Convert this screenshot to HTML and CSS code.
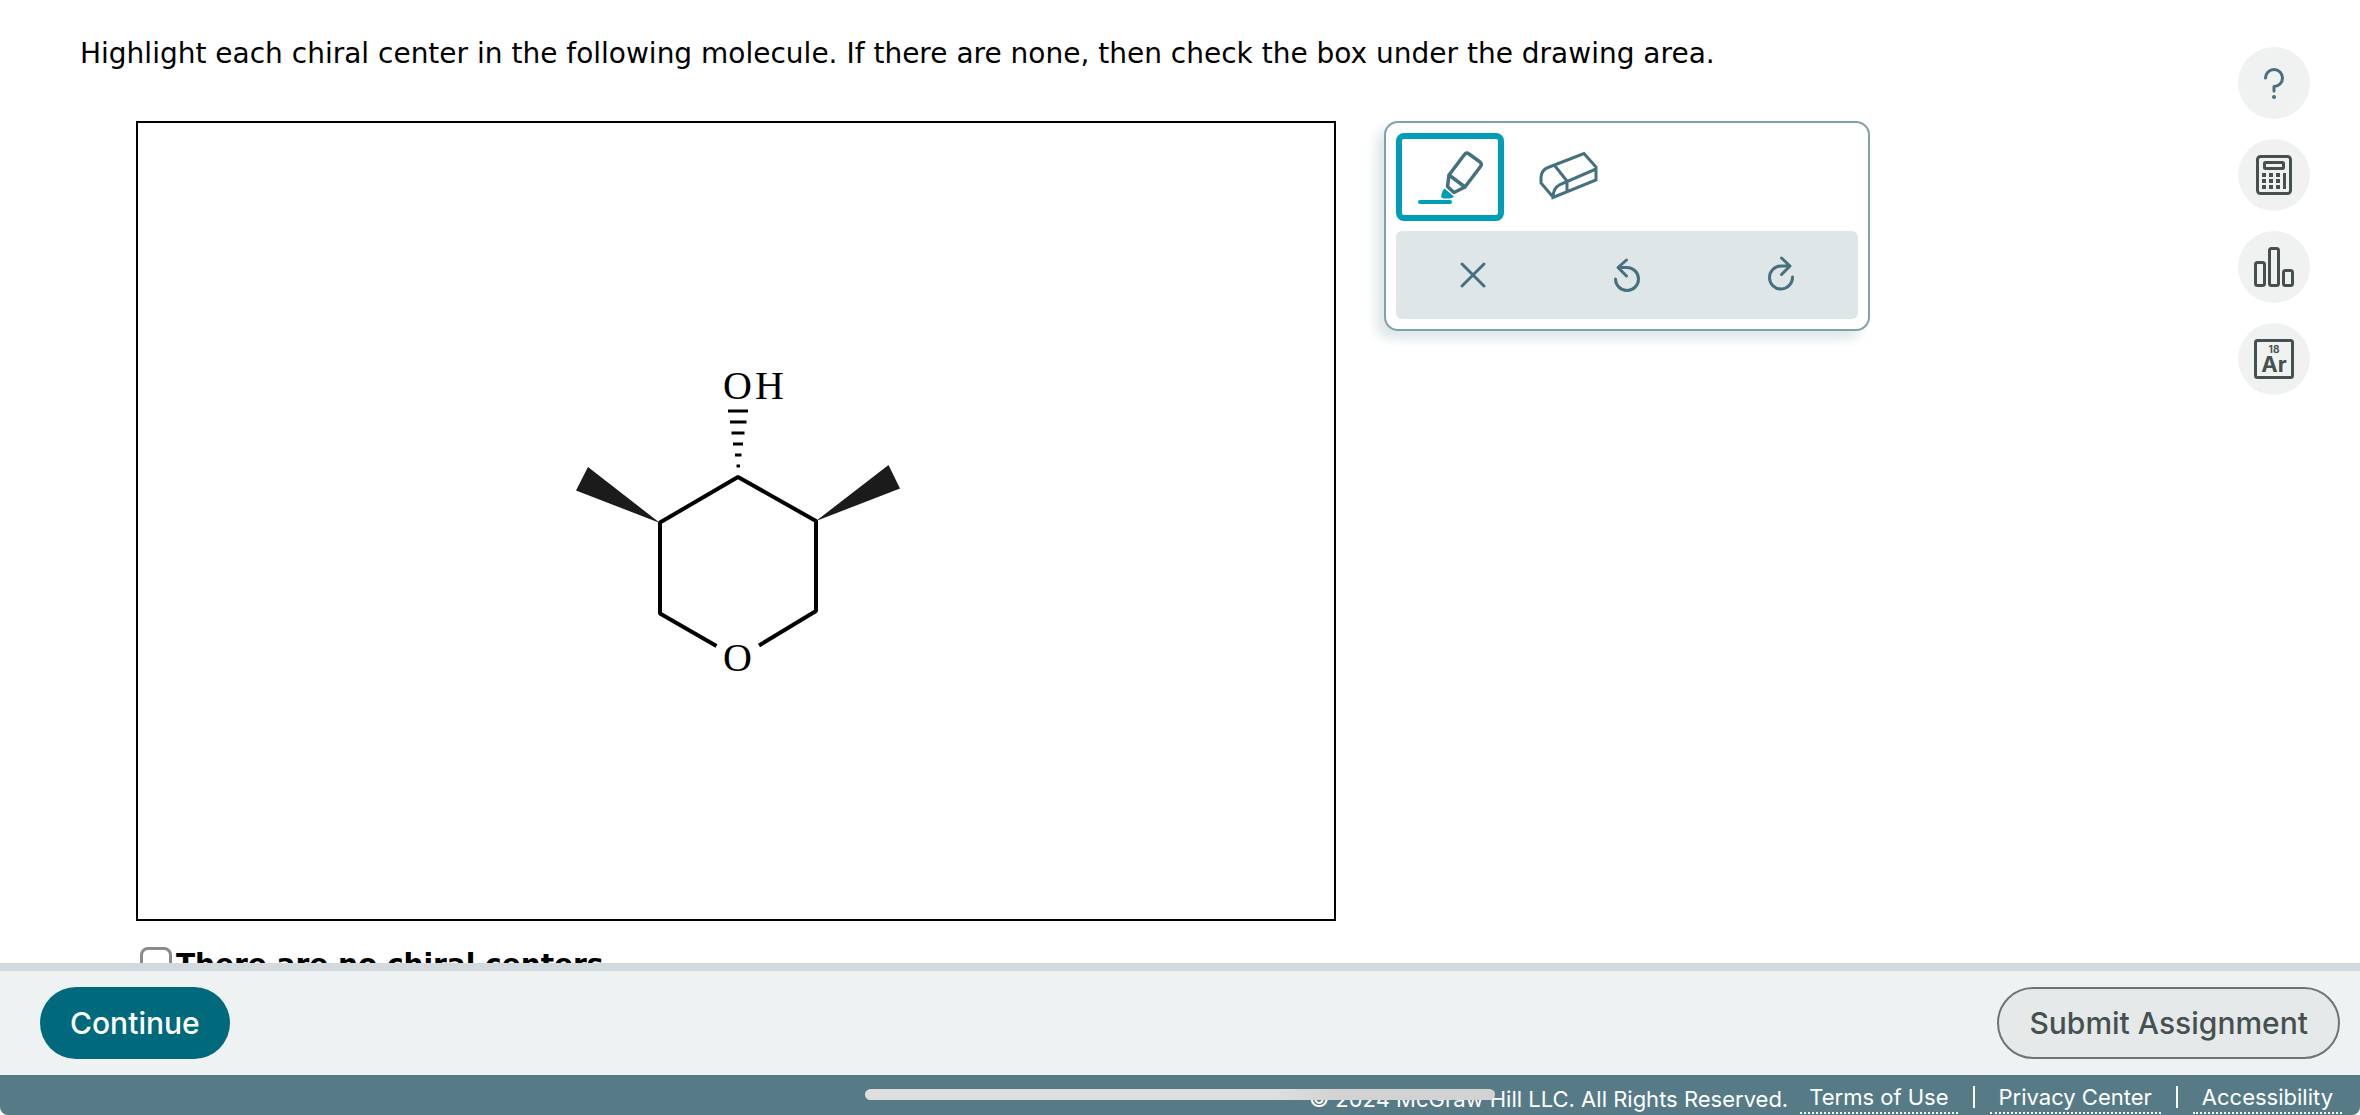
FILE: index.html
```html
<!DOCTYPE html>
<html lang="en">
<head>
<meta charset="utf-8">
<meta name="viewport" content="width=device-width, initial-scale=1">
<title>Chiral centers</title>
<link rel="stylesheet" href="styles.css">
</head>
<body>
<div class="app">
  <main class="workspace">
    <section class="question">
      <p class="prompt">Highlight each chiral center in the following molecule. If there are none, then check the box under the drawing area.</p>
      <div class="exercise">
        <div class="drawing">
          <div class="canvas">
            <svg class="molecule" viewBox="0 0 360 340" role="img" aria-label="Molecule">
              <g fill="none" stroke="#000" stroke-width="4" stroke-linejoin="bevel">
                <path d="M156.500 296 100 263.500V172.500L178 127l78 44v90l-57 34.500"/>
              </g>
              <g stroke="#000" stroke-width="3">
                <path d="M168 61h20M170 72h16.500M171.500 83h13M173 94h10M175 105h6.500M176.500 116h3.500"/>
              </g>
              <path fill="#1b1b1b" d="M28 117 100 173 16 140.500zM328.500 115 340 138.500 256 171z"/>
              <text class="atom" x="163" y="49">O</text>
              <text class="atom" x="195" y="49">H</text>
              <text class="atom" x="163" y="321">O</text>
            </svg>
          </div>
          <label class="none-option"><input type="checkbox" class="tick">There are no chiral centers.</label>
        </div>
        <div class="toolbox">
          <div class="tools">
            <button class="tool tool-active" type="button" aria-label="Highlighter">
              <svg width="96" height="76" viewBox="-6 -4 96 76" fill="none" stroke="#44707f" stroke-width="3.500" stroke-linejoin="round">
                <path d="M41 32 56.500 11.500Q58.500 9 61 11L72 19Q74.500 21 72.500 23.500L57 44z"/>
                <path d="M41 32 39.500 43.500 46 49.500 57 44"/>
                <path d="M36.500 45.500 46 53.500Q44 56 40 55.500H36Q32 55 33.500 51.500 34.500 47 36.500 45.500z" fill="#009db8" stroke="none"/>
                <path d="M12 59H42" stroke="#009db8" stroke-width="4" stroke-linecap="round"/>
              </svg>
            </button>
            <button class="tool" type="button" aria-label="Eraser">
              <svg width="96" height="76" viewBox="6 -4 96 76" fill="none" stroke="#44707f" stroke-width="3">
                <path d="M39 54 27 40V34Q27.500 27 34 24.500L70 10.500 82 24V37L39 54.500Q39 45 46 41.500L82 26M41 23 53 38V49.500"/>
              </svg>
            </button>
          </div>
          <div class="actions">
            <button class="action" type="button" aria-label="Clear">
              <svg width="36" height="40" viewBox="0 0 36 40"><path d="M7 9 29 31M29 9 7 31"/></svg>
            </button>
            <button class="action" type="button" aria-label="Undo">
              <svg width="36" height="40" viewBox="0 0 36 40"><path d="M6.500 24A11.500 11.500 0 1 0 18 12.500H10M17.500 5 9 12.500 17.500 21"/></svg>
            </button>
            <button class="action" type="button" aria-label="Redo">
              <svg width="36" height="40" viewBox="0 0 36 40"><path d="M29.500 22A11.500 11.500 0 1 1 18 11H26.500M18.500 3 27 11 18.500 19.500"/></svg>
            </button>
          </div>
        </div>
      </div>
    </section>
    <aside class="rail">
      <button class="rail-button" type="button" aria-label="Help">
        <svg width="40" height="40" viewBox="0 0 40 40" fill="none" stroke="#44707f" stroke-width="3" stroke-linecap="round" stroke-linejoin="round"><path d="M11.500 15A8.500 8.500 0 1 1 20 23.500V28"/><circle cx="20" cy="34" r="2" fill="#44707f" stroke="none"/></svg>
      </button>
      <button class="rail-button" type="button" aria-label="Calculator">
        <svg width="40" height="40" viewBox="0 0 40 40" fill="none" stroke="#46514f" stroke-width="3"><rect x="3.500" y="1.500" width="33" height="37" rx="3"/><rect x="10.500" y="7.500" width="19" height="6" rx="1"/><path stroke-width="4" stroke-dasharray="4 3" d="M8 20h18M8 26h18M8 32h18"/><path d="M30.500 18v16"/></svg>
      </button>
      <button class="rail-button" type="button" aria-label="Progress">
        <svg width="40" height="40" viewBox="0 0 40 40" fill="none" stroke="#46514f" stroke-width="3"><rect x="1.500" y="15.500" width="9" height="23" rx="2"/><rect x="15.500" y="1.500" width="9" height="37" rx="2"/><rect x="29.500" y="23.500" width="9" height="15" rx="2"/></svg>
      </button>
      <button class="rail-button" type="button" aria-label="Periodic table">
        <svg width="40" height="40" viewBox="0 0 40 40"><rect x="1.500" y="1.500" width="37" height="37" rx="2" fill="none" stroke="#46514f" stroke-width="3"/><text class="element-number" x="20" y="14">18</text><text class="element-symbol" x="20" y="33">Ar</text></svg>
      </button>
    </aside>
  </main>
  <div class="submit-bar">
    <button class="pill pill-primary" type="button">Continue</button>
    <button class="pill pill-outline" type="button">Submit Assignment</button>
  </div>
  <footer class="footer">
    <span class="copyright">© 2024 McGraw Hill LLC. All Rights Reserved.</span>
    <a class="footer-link" href="#">Terms of Use</a>
    <span class="divider"></span>
    <a class="footer-link" href="#">Privacy Center</a>
    <span class="divider"></span>
    <a class="footer-link" href="#">Accessibility</a>
    <div class="home-indicator"></div>
  </footer>
</div>
</body>
</html>
```
FILE: styles.css
```css
* { box-sizing: border-box; }
body {
  margin: 0;
  background: #fff;
  color: #000;
  font-family: "DejaVu Sans", sans-serif;
}
button {
  margin: 0;
  padding: 0;
  border: 0;
  background: none;
  font: inherit;
  cursor: pointer;
}
svg { display: block; }
.app {
  display: flex;
  flex-direction: column;
  height: 100vh;
  overflow: hidden;
}
.workspace {
  flex: 1;
  min-height: 0;
  display: flex;
  justify-content: space-between;
  overflow: hidden;
}
.question { padding: 36px 0 0 80px; }
.prompt {
  margin: 0 0 49px;
  font-size: 28px;
  line-height: 36px;
}
.exercise {
  display: flex;
  align-items: flex-start;
  gap: 48px;
  padding-left: 56px;
}
.canvas {
  display: flex;
  width: 1200px;
  height: 800px;
  padding: 227px 0 0 422px;
  border: 2px solid #000;
}
.molecule {
  width: 360px;
  height: 340px;
}
.atom {
  font-family: "Liberation Serif", serif;
  font-size: 40px;
}
.none-option {
  display: flex;
  align-items: flex-start;
  gap: 4px;
  margin-top: 26px;
  padding-left: 4px;
  font-size: 28px;
  font-weight: 700;
  line-height: 36px;
}
.tick {
  appearance: none;
  width: 32px;
  height: 32px;
  margin: 0;
  border: 3px solid #8b8a8f;
  border-radius: 8px;
  background: #fff;
}
.toolbox {
  display: flex;
  flex-direction: column;
  gap: 10px;
  width: 486px;
  padding: 10px;
  border: 2px solid #82a0a9;
  border-radius: 14px;
  box-shadow: -8px 8px 12px #dfe7e9;
  background: #fff;
}
.tools { display: flex; gap: 10px; }
.tool {
  display: grid;
  place-items: center;
  width: 108px;
  height: 88px;
  border: 6px solid transparent;
  border-radius: 8px;
}
.tool-active { border-color: #009db8; }
.actions {
  display: grid;
  grid-template-columns: repeat(3, 1fr);
  height: 88px;
  border-radius: 6px;
  background: #dfe6e8;
}
.action {
  display: grid;
  place-items: center;
}
.action svg {
  fill: none;
  stroke: #44707f;
  stroke-width: 3;
  stroke-linecap: round;
  stroke-linejoin: round;
}
.rail {
  display: flex;
  flex-direction: column;
  gap: 20px;
  padding: 47px 50px 0 0;
}
.rail-button {
  display: grid;
  place-items: center;
  width: 72px;
  height: 72px;
  border-radius: 50%;
  background: #f0f2f2;
}
.element-number, .element-symbol {
  fill: #46514f;
  font-family: Inter, sans-serif;
  font-weight: 700;
  text-anchor: middle;
}
.element-number { font-size: 10px; }
.element-symbol { font-size: 22px; }
.submit-bar {
  display: flex;
  justify-content: space-between;
  padding: 16px 20px 16px 40px;
  border-top: 8px solid #d2dadd;
  background: #eef2f3;
}
.pill {
  height: 72px;
  padding: 0 30px;
  border-radius: 36px;
  font-family: Inter, sans-serif;
  font-size: 30px;
  font-weight: 500;
}
.pill-primary {
  background: #00697c;
  color: #fff;
}
.pill-outline {
  border: 2px solid #6b7674;
  background: #e5e9ea;
  color: #46514f;
}
.footer {
  position: relative;
  display: flex;
  align-items: flex-start;
  justify-content: flex-end;
  height: 40px;
  padding: 7px 18px 0 0;
  border-radius: 0 0 8px 8px;
  background: #567b86;
  color: #fff;
  font-family: Inter, sans-serif;
  font-size: 22px;
  line-height: 30px;
}
.copyright { margin: 2px 12px 0 0; }
.footer-link {
  padding: 0 9px;
  border-bottom: 2px dotted #fff;
  color: #fff;
  text-decoration: none;
}
.divider {
  width: 2px;
  height: 22px;
  margin: 4px 15px;
  background: #fff;
}
.home-indicator {
  position: absolute;
  top: 14px;
  left: 50%;
  width: 630px;
  height: 11px;
  margin-left: -315px;
  border-radius: 6px;
  background: linear-gradient(90deg, #dedede 65%, #d2d2d2 75%);
}
```
